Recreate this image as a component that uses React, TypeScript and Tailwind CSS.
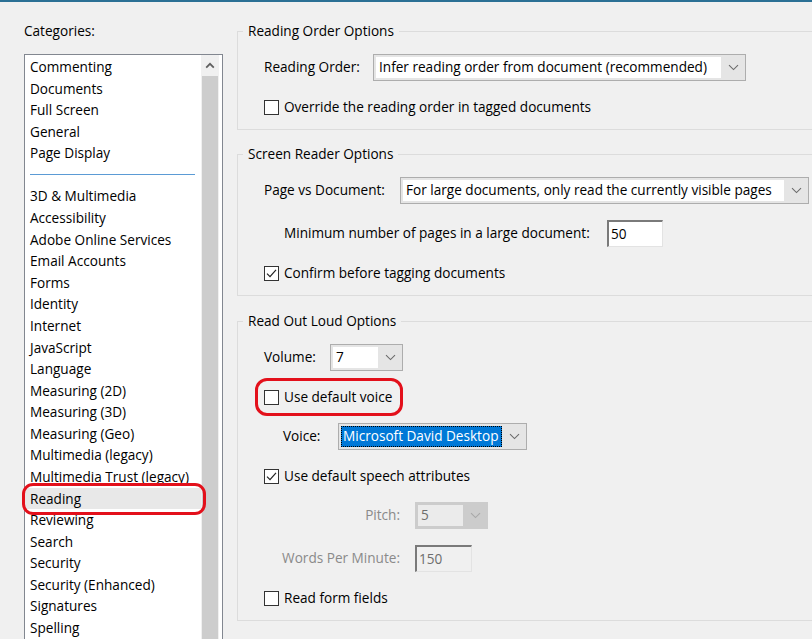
import React from 'react';

const categories = [
  'Commenting',
  'Documents',
  'Full Screen',
  'General',
  'Page Display',
  '---',
  '3D & Multimedia',
  'Accessibility',
  'Adobe Online Services',
  'Email Accounts',
  'Forms',
  'Identity',
  'Internet',
  'JavaScript',
  'Language',
  'Measuring (2D)',
  'Measuring (3D)',
  'Measuring (Geo)',
  'Multimedia (legacy)',
  'Multimedia Trust (legacy)',
  'Reading',
  'Reviewing',
  'Search',
  'Security',
  'Security (Enhanced)',
  'Signatures',
  'Spelling',
];

function Chevron({ color = '#6b6b6b' }: { color?: string }) {
  return (
    <svg width="11" height="7" viewBox="0 0 11 7">
      <path d="M1 1.2 L5.5 5.6 L10 1.2" fill="none" stroke={color} strokeWidth="1.1" />
    </svg>
  );
}

function Checkbox({ checked, label }: { checked?: boolean; label: string }) {
  return (
    <div className="flex h-[20px] items-center gap-[5px]">
      <span className="flex h-[15px] w-[15px] shrink-0 items-center justify-center border border-[#333333] bg-white">
        {checked && (
          <svg width="13" height="13" viewBox="0 0 13 13">
            <path d="M2 6.6 L5 9.6 L11 2.8" fill="none" stroke="#222222" strokeWidth="1.2" />
          </svg>
        )}
      </span>
      <span>{label}</span>
    </div>
  );
}

interface ComboProps {
  value: string;
  className: string;
  disabled?: boolean;
  selected?: boolean;
}

function ComboBox({ value, className, disabled, selected }: ComboProps) {
  return (
    <div
      className={`flex h-[27px] shrink-0 border p-[2px] pr-0 ${
        disabled ? 'border-[#cccccc] bg-[#cccccc]' : 'border-[#adadad] bg-[#e5e5e5]'
      } ${className}`}
    >
      <div
        className={`flex min-w-0 flex-1 items-center whitespace-nowrap ${
          selected
            ? 'bg-[#0078d7] pl-[2px] text-white outline-1 -outline-offset-1 outline-dotted outline-black'
            : disabled
              ? 'bg-[#ebebeb] pl-[3px] text-[#6d6d6d]'
              : 'bg-white pl-[3px]'
        }`}
      >
        {value}
      </div>
      <div className="flex w-[24px] shrink-0 items-center justify-center">
        <Chevron color={disabled ? '#a8a8a8' : '#6b6b6b'} />
      </div>
    </div>
  );
}

function TextField({ value, className, disabled }: { value: string; className: string; disabled?: boolean }) {
  return (
    <div
      className={`flex h-[27px] shrink-0 items-center border-t-2 border-l-2 border-r border-b border-t-[#7a7a7a] border-l-[#7a7a7a] border-r-[#e3e3e3] border-b-[#e3e3e3] pl-[2px] ${
        disabled ? 'bg-[#f0f0f0] text-[#6d6d6d]' : 'bg-white'
      } ${className}`}
    >
      {value}
    </div>
  );
}

function GroupBox({ title, className, children }: { title: string; className?: string; children: React.ReactNode }) {
  return (
    <fieldset className={`w-[600px] border border-[#dcdcdc] ${className ?? ''}`}>
      <legend className="ml-[5px] px-[5px] leading-[20px]">{title}</legend>
      <div className="flex flex-col gap-4 pt-[13px] pb-[12px] pl-[26px]">{children}</div>
    </fieldset>
  );
}

export default function App() {
  return (
    <div className="flex h-[639px] w-[812px] overflow-hidden border-t-2 border-[#2b7095] bg-[#f0f0f0] font-['Open_Sans','Noto_Sans',sans-serif] text-[13.6px] text-black">
      {/* Categories column */}
      <div className="w-[237px] shrink-0 pt-[19px] pl-[24px]">
        <div className="leading-[20px]">Categories:</div>
        <div className="mt-[13px] flex h-[620px] w-[199px] border border-[#828790] bg-white">
          <ul className="w-[176px] pt-[1px]">
            {categories.map((c, i) =>
              c === '---' ? (
                <li key={i} className="flex h-[21.58px] items-center pl-[5px]">
                  <div className="h-px w-[165px] bg-[#5b9bd5]" />
                </li>
              ) : (
                <li
                  key={i}
                  className={`relative h-[21.58px] whitespace-nowrap pl-[5px] leading-[21.58px] ${
                    c === 'Reading' ? 'bg-[#e8e8e8]' : ''
                  }`}
                >
                  {c}
                  {c === 'Reading' && (
                    <span className="absolute -top-[5px] -right-[5px] -bottom-[6px] -left-[3px] rounded-[11px] border-[3px] border-[#e3101b]" />
                  )}
                </li>
              ),
            )}
          </ul>
          <div className="flex w-[18px] flex-col">
            <div className="flex h-[21px] items-center justify-center bg-[#f0f0f0]">
              <svg width="10" height="7" viewBox="0 0 10 7">
                <path d="M1.2 5.6 L5 1.8 L8.8 5.6" fill="none" stroke="#606060" strokeWidth="1.8" />
              </svg>
            </div>
            <div className="flex-1 bg-[#f0f0f0] px-px">
              <div className="h-full bg-[#cdcdcd]" />
            </div>
          </div>
        </div>
      </div>

      {/* Options column */}
      <div className="flex flex-col pt-[19px]">
        <GroupBox title="Reading Order Options">
          <div className="flex items-center">
            <span className="w-[109px] shrink-0">Reading Order:</span>
            <ComboBox value="Infer reading order from document (recommended)" className="w-[373px]" />
          </div>
          <Checkbox label="Override the reading order in tagged documents" />
        </GroupBox>

        <GroupBox title="Screen Reader Options" className="mt-[14px]">
          <div className="flex items-center">
            <span className="w-[136px] shrink-0">Page vs Document:</span>
            <ComboBox value="For large documents, only read the currently visible pages" className="w-[409px]" />
          </div>
          <div className="ml-[20px] flex items-center">
            <span className="w-[323px] shrink-0">Minimum number of pages in a large document:</span>
            <TextField value="50" className="w-[56px]" />
          </div>
          <Checkbox checked label="Confirm before tagging documents" />
        </GroupBox>

        <GroupBox title="Read Out Loud Options" className="mt-[15px]">
          <div className="flex items-center">
            <span className="w-[66px] shrink-0">Volume:</span>
            <ComboBox value="7" className="w-[73px]" />
          </div>
          <div className="relative self-start">
            <Checkbox label="Use default voice" />
            <span className="absolute -top-[9px] -right-[11px] -bottom-[9px] -left-[9px] rounded-[12px] border-[3px] border-[#e3101b]" />
          </div>
          <div className="ml-[19px] flex items-center">
            <span className="w-[55px] shrink-0">Voice:</span>
            <ComboBox value="Microsoft David Desktop" className="w-[189px]" selected />
          </div>
          <Checkbox checked label="Use default speech attributes" />
          <div className="flex items-center">
            <span className="w-[151px] shrink-0 pr-[15px] text-right text-[#8a8a8a]">Pitch:</span>
            <ComboBox value="5" className="w-[73px]" disabled />
          </div>
          <div className="flex items-center">
            <span className="w-[151px] shrink-0 pr-[15px] text-right text-[#8a8a8a]">Words Per Minute:</span>
            <TextField value="150" className="w-[57px]" disabled />
          </div>
          <Checkbox label="Read form fields" />
        </GroupBox>
      </div>
    </div>
  );
}
